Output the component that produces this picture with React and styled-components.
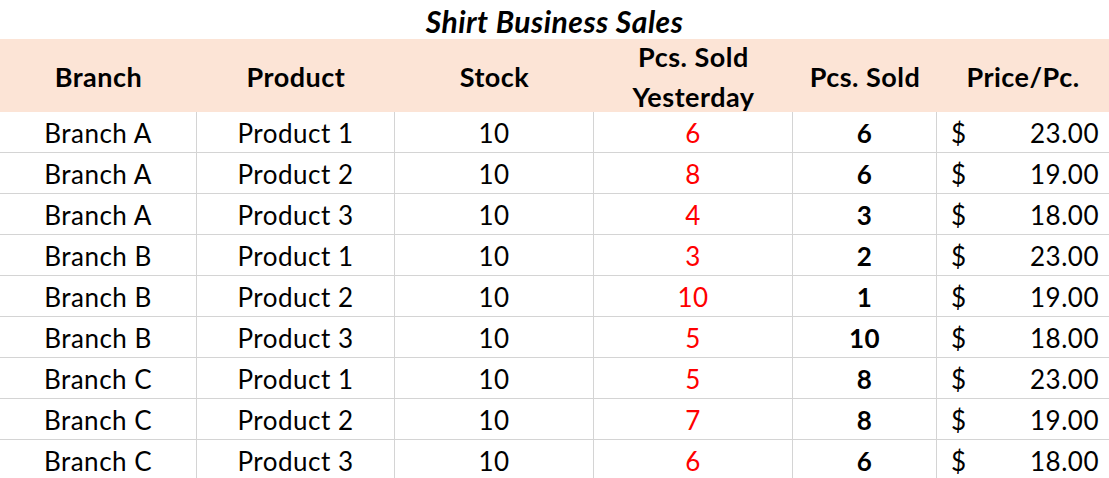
import styled, { createGlobalStyle } from 'styled-components';

const GlobalStyle = createGlobalStyle`
  body {
    margin: 0;
    background: #ffffff;
    font-family: Lato, "Open Sans", sans-serif;
  }
`;

const Sheet = styled.div`
  width: 1109px;
  height: 478px;
  overflow: hidden;
  background: #ffffff;
`;

const Title = styled.div`
  height: 39px;
  display: flex;
  align-items: flex-end;
  justify-content: center;
  font-size: 30px;
  font-weight: 700;
  font-style: italic;
  letter-spacing: 0.5px;
  line-height: 35px;
  color: #000;
`;

const Grid = styled.div`
  display: grid;
  grid-template-columns: 197px 198px 199px 199px 144px 172px;
`;

const HeaderCell = styled.div`
  height: 73px;
  background: #fce4d6;
  display: flex;
  align-items: center;
  justify-content: center;
  text-align: center;
  font-size: 27px;
  font-weight: 700;
  letter-spacing: 0.5px;
  line-height: 40px;
  color: #000;
  padding-top: 2px;
  box-sizing: border-box;
`;

const Cell = styled.div`
  height: 41px;
  box-sizing: border-box;
  border-bottom: 1px solid #d4d4d4;
  border-right: ${(p) => (p.$last ? 'none' : '1px solid #d4d4d4')};
  display: flex;
  align-items: flex-end;
  justify-content: center;
  padding-bottom: 4px;
  font-size: 26px;
  letter-spacing: 0.5px;
  line-height: 30px;
  font-weight: ${(p) => (p.$bold ? 700 : 400)};
  color: ${(p) => (p.$red ? '#ff0000' : '#000')};
`;

const PriceCell = styled(Cell)`
  justify-content: space-between;
  padding-left: 14px;
  padding-right: 10px;
`;

const headers = ['Branch', 'Product', 'Stock', null, 'Pcs. Sold', 'Price/Pc.'];

const rows = [
  ['Branch A', 'Product 1', 10, 6, 6, '23.00'],
  ['Branch A', 'Product 2', 10, 8, 6, '19.00'],
  ['Branch A', 'Product 3', 10, 4, 3, '18.00'],
  ['Branch B', 'Product 1', 10, 3, 2, '23.00'],
  ['Branch B', 'Product 2', 10, 10, 1, '19.00'],
  ['Branch B', 'Product 3', 10, 5, 10, '18.00'],
  ['Branch C', 'Product 1', 10, 5, 8, '23.00'],
  ['Branch C', 'Product 2', 10, 7, 8, '19.00'],
  ['Branch C', 'Product 3', 10, 6, 6, '18.00'],
];

function App() {
  return (
    <>
      <GlobalStyle />
      <Sheet>
        <Title>Shirt Business Sales</Title>
        <Grid>
          {headers.map((h, i) => (
            <HeaderCell key={i}>
              {h === null ? (
                <span>
                  Pcs. Sold
                  <br />
                  Yesterday
                </span>
              ) : (
                h
              )}
            </HeaderCell>
          ))}
          {rows.map((r, i) => [
            <Cell key={`${i}-0`}>{r[0]}</Cell>,
            <Cell key={`${i}-1`}>{r[1]}</Cell>,
            <Cell key={`${i}-2`}>{r[2]}</Cell>,
            <Cell key={`${i}-3`} $red>
              {r[3]}
            </Cell>,
            <Cell key={`${i}-4`} $bold>
              {r[4]}
            </Cell>,
            <PriceCell key={`${i}-5`} $last>
              <span>$</span>
              <span>{r[5]}</span>
            </PriceCell>,
          ])}
        </Grid>
      </Sheet>
    </>
  );
}

export default App;
